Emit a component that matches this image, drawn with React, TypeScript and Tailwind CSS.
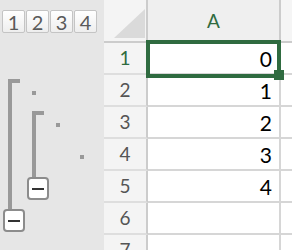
import React from 'react';

const ROWS = [
  { n: 1, v: '0' },
  { n: 2, v: '1' },
  { n: 3, v: '2' },
  { n: 4, v: '3' },
  { n: 5, v: '4' },
  { n: 6, v: '' },
  { n: 7, v: '' },
];

function OutlineSymbols() {
  // group brackets, dots and collapse buttons of the row outline
  return (
    <svg width="104" height="207" viewBox="0 0 104 207" className="block">
      <rect x="8" y="36" width="4" height="130" fill="#999999" />
      <rect x="8" y="36" width="12" height="4" fill="#999999" />
      <rect x="32" y="48" width="4" height="4" fill="#999999" />
      <rect x="32" y="68" width="4" height="66" fill="#999999" />
      <rect x="32" y="68" width="12" height="4" fill="#999999" />
      <rect x="56" y="80" width="4" height="4" fill="#999999" />
      <rect x="80" y="112" width="4" height="4" fill="#999999" />
      <rect x="28" y="135" width="20" height="21" rx="3" fill="#ffffff" stroke="#8c8c8c" strokeWidth="2" />
      <rect x="32" y="145" width="12" height="2" fill="#333333" />
      <rect x="4" y="167" width="20" height="21" rx="3" fill="#ffffff" stroke="#8c8c8c" strokeWidth="2" />
      <rect x="8" y="177" width="12" height="2" fill="#333333" />
    </svg>
  );
}

export default function App() {
  return (
    <div className="flex w-[292px] h-[250px] overflow-hidden bg-white font-['Lato',sans-serif]">
      <div className="w-[104px] shrink-0 flex flex-col bg-[#e6e6e6]">
        <div className="h-[43px] flex gap-px pl-[2px] pt-[10px]">
          {[1, 2, 3, 4].map((l) => (
            <div
              key={l}
              className="w-[23px] h-[23px] flex items-center justify-center rounded-[2px] border border-[#c4c4c4] bg-gradient-to-b from-white to-[#eeeeee] text-[20px] leading-none text-[#5a5a5a]"
            >
              {l}
            </div>
          ))}
        </div>
        <OutlineSymbols />
      </div>

      <div className="flex-1 flex flex-col">
        <div className="flex h-[43px] shrink-0">
          <div className="w-[44px] shrink-0 bg-[#f4f4f4] border-b-2 border-r-2 border-[#cccccc] flex items-end justify-end pr-px pb-[3px]">
            <svg width="31" height="29" viewBox="0 0 31 29" className="block">
              <polygon points="0,29 31,0 31,29" fill="#dadada" />
            </svg>
          </div>
          <div className="w-[133px] shrink-0 bg-[#efefef] border-b-2 border-r-2 border-[#cccccc] flex items-center justify-center pt-px text-[19px] text-[#2f6b40]">
            A
          </div>
          <div className="flex-1 bg-[#f5f5f5] border-b-2 border-[#cccccc]" />
        </div>

        {ROWS.map((r) => (
          <div key={r.n} className="flex h-[32px] shrink-0">
            <div
              className={
                'w-[44px] shrink-0 bg-[#f4f4f4] border-b-2 border-r-2 border-b-[#dedede] border-r-[#cccccc] flex items-center justify-center text-[19px] ' +
                (r.n === 1 ? 'text-[#2f6b40]' : 'text-[#555555]')
              }
            >
              {r.n}
            </div>
            <div className="relative w-[133px] shrink-0 border-b-2 border-r-2 border-[#d6d6d6] flex items-end justify-end pr-[7px] pb-[2px] text-[21px] leading-[24px] text-black">
              {r.v}
              {r.n === 1 && (
                <>
                  <div className="absolute left-[-2px] top-[-3px] w-[135px] h-[38px] border-4 border-[#2f6b40] z-10 pointer-events-none" />
                  <div className="absolute left-[126px] top-[27px] w-[10px] h-[10px] bg-[#2f6b40] z-20" />
                </>
              )}
            </div>
            <div className="flex-1 border-b-2 border-[#d6d6d6]" />
          </div>
        ))}
      </div>
    </div>
  );
}
